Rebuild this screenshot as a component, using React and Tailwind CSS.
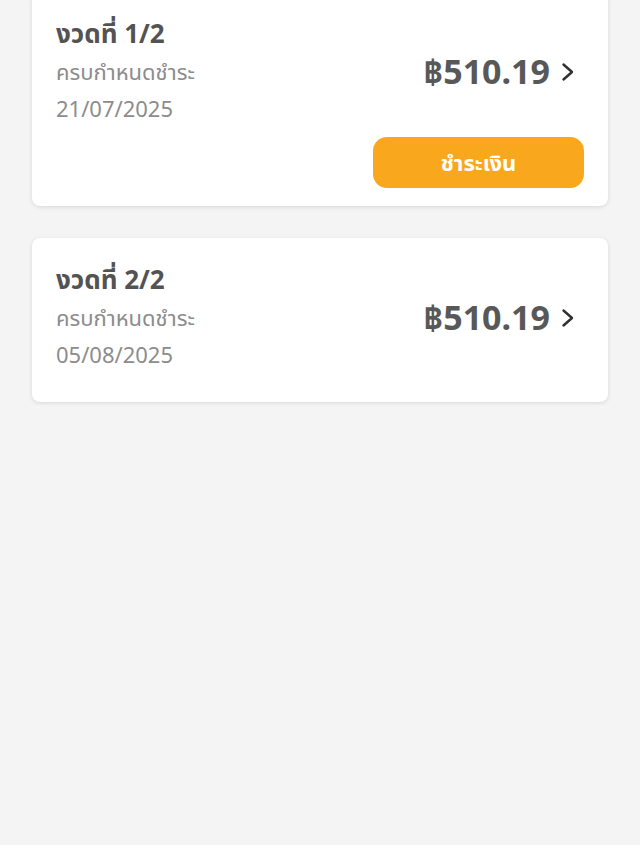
const installments = [
  { no: "1/2", due: "21/07/2025", amount: "510.19", payable: true },
  { no: "2/2", due: "05/08/2025", amount: "510.19", payable: false },
];

function Chevron() {
  return (
    <svg width="14" height="20" viewBox="0 0 14 20" fill="none" className="text-[#2f2f2f]">
      <path d="M2.5 2.5 L11 10 L2.5 17.5" stroke="currentColor" strokeWidth="2.4" strokeLinecap="round" strokeLinejoin="round" />
    </svg>
  );
}

function InstallmentCard({ item }) {
  return (
    <div className="rounded-lg bg-white px-6 shadow-[0_1px_4px_rgba(0,0,0,0.12)]">
      <div className={item.payable ? "pt-[23px] pb-[18px]" : "pt-[23px] pb-[30px]"}>
        <div className="flex items-center justify-between">
          <div>
            <p className="text-[26px] font-bold leading-[36px] text-[#535353]">งวดที่ {item.no}</p>
            <p className="mt-[2px] text-[22px] leading-[36px] text-[#8c8c8c]">ครบกำหนดชำระ</p>
            <p className="mt-[1px] text-[22px] leading-[36px] text-[#8c8c8c]">{item.due}</p>
          </div>
          <div className="flex items-center gap-[11px] pt-[2px] pr-[9px]">
            <span className="text-[34px] font-bold text-[#585858]">฿{item.amount}</span>
            <Chevron />
          </div>
        </div>
        {item.payable && (
          <div className="mt-[11px] flex justify-end">
            <button className="h-[51px] w-[211px] rounded-[14px] bg-[#f9a81d] text-[22px] font-bold text-white">
              ชำระเงิน
            </button>
          </div>
        )}
      </div>
    </div>
  );
}

export default function App() {
  return (
    <div className="min-h-[853px] bg-[#f4f4f4] font-['Noto_Sans','Noto_Sans_Thai',sans-serif]">
      <div className="-mt-[8px] flex flex-col gap-8 px-8">
        {installments.map((item) => (
          <InstallmentCard key={item.no} item={item} />
        ))}
      </div>
    </div>
  );
}
